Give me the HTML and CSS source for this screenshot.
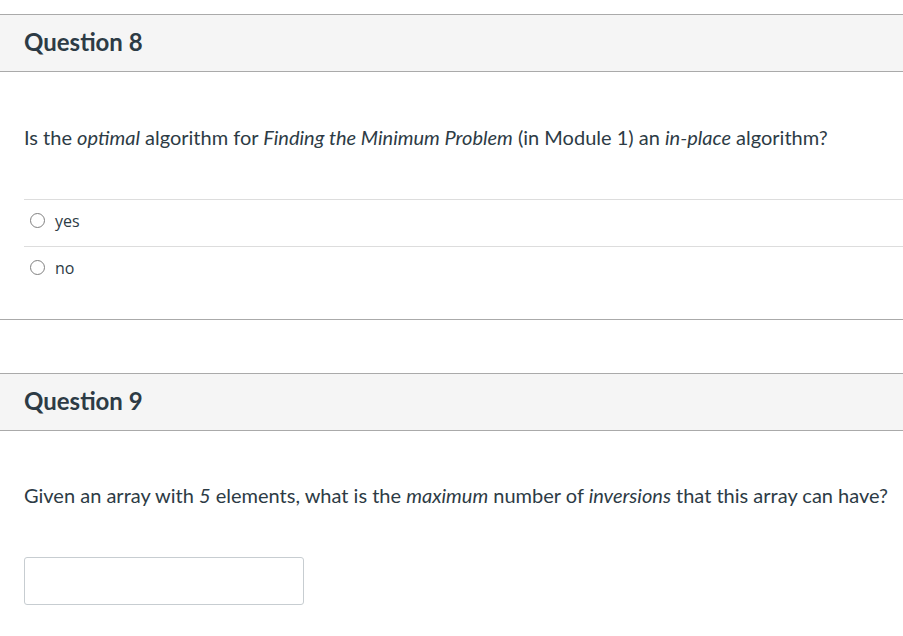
FILE: index.html
```html
<!DOCTYPE html>
<html>
<head>
<meta charset="utf-8">
<link rel="stylesheet" href="styles.css">
</head>
<body>
<div class="question q8">
  <div class="q-header"><h2>Question 8</h2></div>
  <div class="q-body">
    <p class="q-text">Is the <em>optimal</em> algorithm for <em>Finding the Minimum Problem</em> (in Module 1) an <em>in-place</em> algorithm?</p>
    <div class="answers">
      <label class="answer"><span class="radio"></span><span class="a-text">yes</span></label>
      <label class="answer"><span class="radio"></span><span class="a-text">no</span></label>
    </div>
  </div>
</div>
<div class="question q9">
  <div class="q-header"><h2>Question 9</h2></div>
  <div class="q-body">
    <p class="q-text">Given an array with <em>5</em> elements, what is the <em>maximum</em> number of <em>inversions</em> that this array can have?</p>
    <div class="input-wrap"><div class="text-input"></div></div>
  </div>
</div>
</body>
</html>
```

FILE: styles.css
```css
html, body {
  margin: 0;
  padding: 0;
  background: #fff;
}
body {
  font-family: Lato, "Open Sans", sans-serif;
  color: #2d3b45;
  overflow: hidden;
}
.question {
  border-top: 1px solid #aaaaaa;
  border-bottom: 1px solid #aaaaaa;
}
.q8 {
  margin-top: 14px;
}
.q9 {
  margin-top: 53px;
  border-bottom: none;
}
.q-header {
  background: #f5f5f5;
  border-bottom: 1px solid #aaaaaa;
  height: 57px;
  display: flex;
  align-items: center;
  padding-left: 24px;
  padding-bottom: 4px;
  box-sizing: border-box;
}
.q-header h2 {
  margin: 0;
  font-size: 24px;
  font-weight: 700;
  color: #2d3b45;
}
.q-body {
  padding-left: 24px;
}
.q-text {
  margin: 0;
  font-size: 20px;
  line-height: 28px;
  padding-top: 51px;
  height: 76px;
}
.q-text em {
  font-style: italic;
}
.answers {
  padding-bottom: 26px;
}
.answer {
  display: flex;
  align-items: center;
  border-top: 1px solid #dddddd;
  padding-left: 6px;
  padding-bottom: 5px;
  box-sizing: content-box;
  height: 41px;
}
.radio {
  width: 15px;
  height: 15px;
  border: 1px solid #808080;
  border-radius: 50%;
  box-sizing: border-box;
  margin-right: 10px;
  flex: none;
}
.a-text {
  font-family: "Open Sans", "Noto Sans", sans-serif;
  font-size: 16px;
  color: #2d3b45;
}
.q9 .q-text {
  padding-top: 50px;
  height: 76px;
}
.input-wrap {
  padding-bottom: 30px;
}
.text-input {
  width: 278px;
  height: 46px;
  border: 1px solid #c7cdd1;
  border-radius: 3px;
  background: #fff;
}
```
